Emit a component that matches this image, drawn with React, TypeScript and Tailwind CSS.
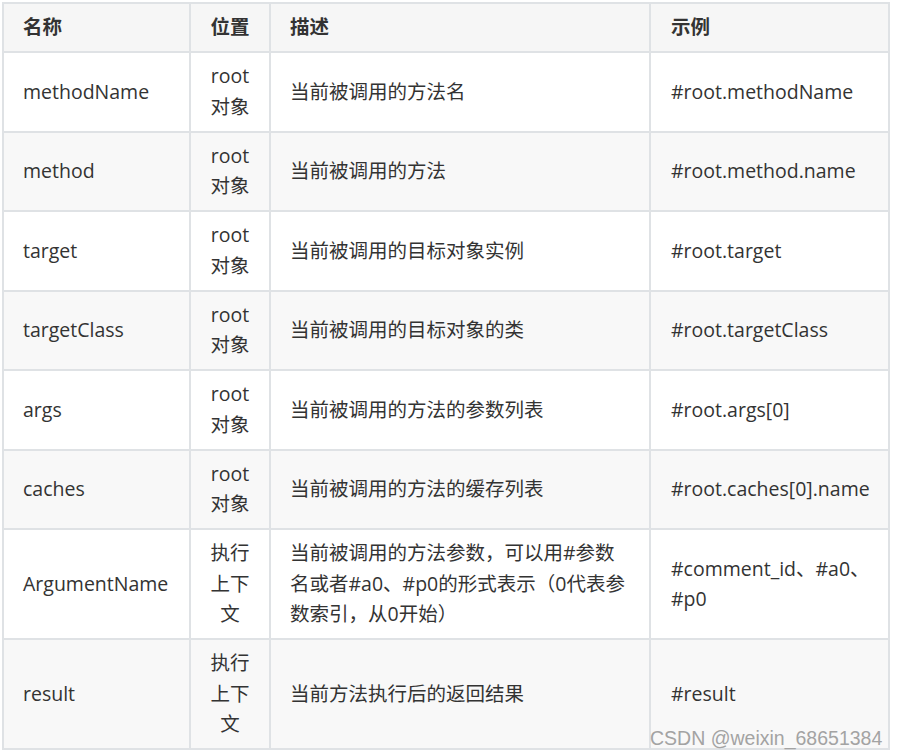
import React from "react";

type Row = {
  name: string;
  pos: string[];
  desc: string[];
  example: string[];
};

const rows: Row[] = [
  { name: "methodName", pos: ["root", "对象"], desc: ["当前被调用的方法名"], example: ["#root.methodName"] },
  { name: "method", pos: ["root", "对象"], desc: ["当前被调用的方法"], example: ["#root.method.name"] },
  { name: "target", pos: ["root", "对象"], desc: ["当前被调用的目标对象实例"], example: ["#root.target"] },
  { name: "targetClass", pos: ["root", "对象"], desc: ["当前被调用的目标对象的类"], example: ["#root.targetClass"] },
  { name: "args", pos: ["root", "对象"], desc: ["当前被调用的方法的参数列表"], example: ["#root.args[0]"] },
  { name: "caches", pos: ["root", "对象"], desc: ["当前被调用的方法的缓存列表"], example: ["#root.caches[0].name"] },
  {
    name: "ArgumentName",
    pos: ["执行", "上下", "文"],
    desc: ["当前被调用的方法参数，可以用#参数", "名或者#a0、#p0的形式表示（0代表参", "数索引，从0开始）"],
    example: ["#comment_id、#a0、", "#p0"],
  },
  { name: "result", pos: ["执行", "上下", "文"], desc: ["当前方法执行后的返回结果"], example: ["#result"] },
];

function Lines({ lines }: { lines: string[] }) {
  return (
    <>
      {lines.map((l, i) => (
        <span key={i} className="block whitespace-nowrap">
          {l}
        </span>
      ))}
    </>
  );
}

export default function App() {
  const cell = "flex items-center py-[8.25px] leading-[30.5px]";
  return (
    <div className="min-h-[756px] w-[897px] bg-white font-['Open_Sans','Noto_Sans_CJK_SC',sans-serif] text-[19.5px] text-[#333]">
      <div className="relative ml-[2px] pt-[2px]">
        <div className="grid w-[888px] grid-cols-[185px_78px_378px_237px] gap-[2px] bg-[#dfe2e5] p-[2px]">
          <div className={`${cell} bg-[#f6f6f6] pl-[19px] font-bold`}>名称</div>
          <div className={`${cell} justify-center bg-[#f6f6f6] font-bold`}>位置</div>
          <div className={`${cell} bg-[#f6f6f6] pl-[19px] font-bold`}>描述</div>
          <div className={`${cell} bg-[#f6f6f6] pl-[20px] font-bold`}>示例</div>
          {rows.map((r, i) => {
            const bg = i % 2 === 1 ? "bg-[#f8f8f8]" : "bg-white";
            return (
              <React.Fragment key={r.name}>
                <div className={`${cell} ${bg} pl-[19px] whitespace-nowrap`}>{r.name}</div>
                <div className={`${cell} ${bg} justify-center text-center`}>
                  <div>
                    <Lines lines={r.pos} />
                  </div>
                </div>
                <div className={`${cell} ${bg} pl-[19px]`}>
                  <div>
                    <Lines lines={r.desc} />
                  </div>
                </div>
                <div className={`${cell} ${bg} pl-[20px]`}>
                  <div>
                    <Lines lines={r.example} />
                  </div>
                </div>
              </React.Fragment>
            );
          })}
        </div>
        <div className="absolute bottom-[1px] left-[648px] font-['Liberation_Sans',sans-serif] text-[19.5px] leading-[22px] text-[#a3a3a3]">
          CSDN @weixin_68651384
        </div>
      </div>
    </div>
  );
}
